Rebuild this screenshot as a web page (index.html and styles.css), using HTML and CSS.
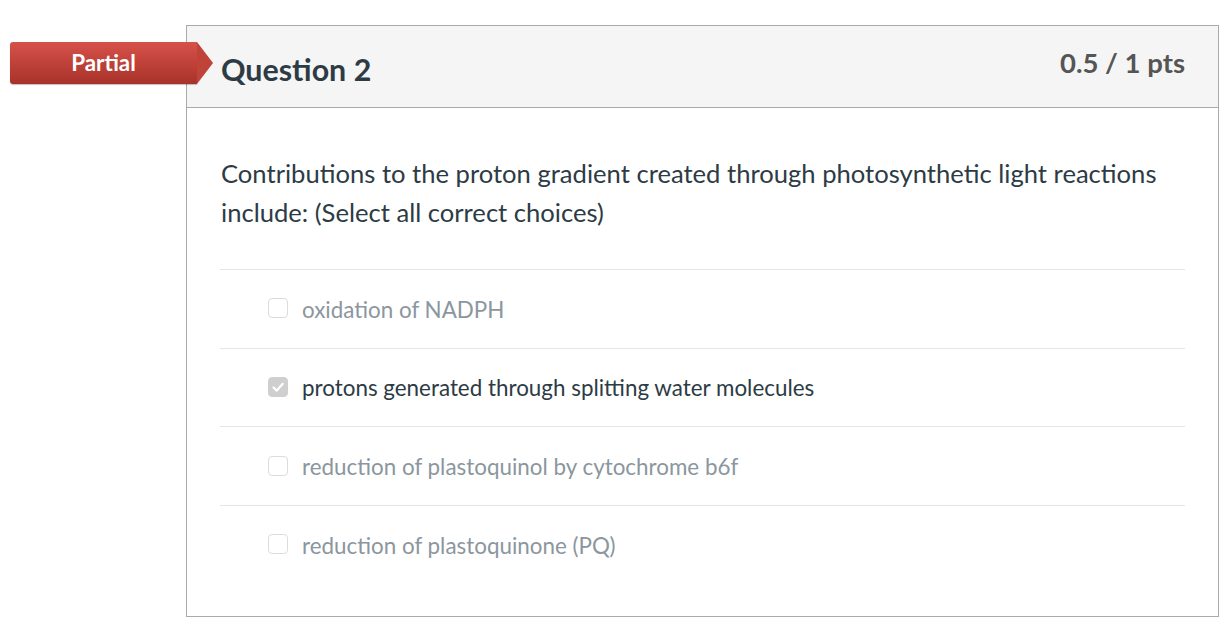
FILE: index.html
```html
<!DOCTYPE html>
<html>
<head>
<meta charset="utf-8">
<link rel="stylesheet" href="styles.css">
</head>
<body>
<div class="page">
  <div class="badge"><span class="badge-text">Partial</span></div>
  <div class="card">
    <div class="card-header">
      <h2 class="q-title">Question 2</h2>
      <div class="q-points">0.5 / 1 pts</div>
    </div>
    <div class="card-body">
      <p class="q-text">Contributions to the proton gradient created through photosynthetic light reactions include: (Select all correct choices)</p>
      <ul class="answers">
        <li class="answer"><span class="box"></span><span class="label">oxidation of NADPH</span></li>
        <li class="answer selected"><span class="box checked"><svg viewBox="0 0 20 20" width="20" height="20"><path d="M5.5 10.5 L8.8 13.6 L14.8 6.8" fill="none" stroke="#fff" stroke-width="2.2" stroke-linecap="round" stroke-linejoin="round"/></svg></span><span class="label">protons generated through splitting water molecules</span></li>
        <li class="answer"><span class="box"></span><span class="label">reduction of plastoquinol by cytochrome b6f</span></li>
        <li class="answer"><span class="box"></span><span class="label">reduction of plastoquinone (PQ)</span></li>
      </ul>
    </div>
  </div>
</div>
</body>
</html>
```

FILE: styles.css
```css
* { box-sizing: border-box; }
html, body { margin: 0; padding: 0; background: #fff; }
body { font-family: Lato, "Open Sans", sans-serif; color: #2d3b45; }

.page {
  position: relative;
  padding: 25px 11px 0 186px;
  height: 630px;
}

.badge {
  position: absolute;
  left: 10px;
  top: 42px;
  width: 187px;
  height: 42px;
  background: linear-gradient(#d65249, #a8322a);
  border-radius: 3px 0 0 3px;
  box-shadow: 0 1px 1px rgba(0,0,0,0.25);
  z-index: 2;
}
.badge::after {
  content: "";
  position: absolute;
  right: -16px;
  top: 0;
  width: 0;
  height: 0;
  border-top: 21px solid transparent;
  border-bottom: 21px solid transparent;
  border-left: 16px solid #c0433a;
}
.badge-text {
  display: block;
  width: 187px;
  text-align: center;
  font-weight: 700;
  font-size: 22.4px;
  line-height: 42px;
  color: #fff;
}

.card {
  width: 1033px;
  height: 592px;
  border: 1px solid #aaaaaa;
  background: #fff;
}

.card-header {
  display: flex;
  justify-content: space-between;
  align-items: flex-start;
  height: 82px;
  background: #f5f5f5;
  border-bottom: 1px solid #aaaaaa;
  padding: 0 33px 0 34px;
}
.q-title {
  margin: 0;
  padding-top: 24px;
  font-size: 30.4px;
  font-weight: 700;
  line-height: 38px;
  color: #2d3b45;
}
.q-points {
  padding-top: 21px;
  font-size: 27.5px;
  font-weight: 700;
  line-height: 32px;
  color: #555;
}

.card-body {
  padding: 0 33px 0 33px;
}
.q-text {
  margin: 0;
  padding: 46px 0 37px 1px;
  font-size: 25.6px;
  line-height: 39px;
  color: #2d3b45;
}

.answers {
  list-style: none;
  margin: 0;
  padding: 0;
}
.answer {
  display: flex;
  align-items: center;
  height: 78.67px;
  border-top: 1px solid #e5e5e5;
  padding-left: 48px;
  padding-top: 1px;
}
.box {
  width: 20px;
  height: 20px;
  border: 1px solid #dcdcdc;
  border-radius: 4px;
  background: #fff;
  margin-right: 14px;
  flex: none;
  position: relative;
  top: -1px;
}
.box.checked {
  background: #cfcfcf;
  border-color: #cfcfcf;
  display: flex;
  align-items: center;
  justify-content: center;
}
.box.checked svg { display: block; margin: -1px; }
.label {
  font-size: 22.4px;
  color: #8b969e;
}
.selected .label { color: #2d3b45; }
```
